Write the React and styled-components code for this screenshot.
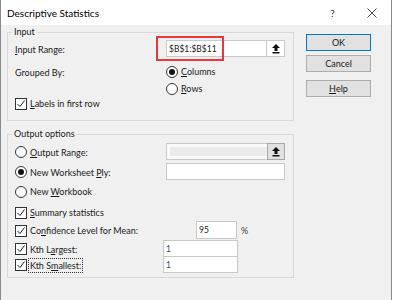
import React from "react";
import styled, { createGlobalStyle } from "styled-components";

const GlobalStyle = createGlobalStyle`
  html, body {
    margin: 0;
    padding: 0;
    background: #ffffff;
  }
  body {
    font-family: Lato, "Noto Sans", "Liberation Sans", sans-serif;
  }
`;

const Window = styled.div`
  width: 392px;
  height: 300px;
  box-sizing: border-box;
  background: #f0f0f0;
  border-left: 1px solid #8a8a8a;
  border-right: 1px solid #8a8a8a;
  overflow: hidden;
  font-size: 9px;
  color: #1a1a1a;
`;

const TitleBar = styled.div`
  height: 25px;
  background: #ffffff;
  display: flex;
  align-items: center;
  padding-left: 6px;
`;

const Title = styled.div`
  flex: 1;
  font-size: 10px;
  color: #000;
`;

const TitleButton = styled.div`
  width: 39px;
  height: 25px;
  display: flex;
  align-items: center;
  justify-content: center;
  font-size: 10px;
  color: #333;
`;

const Body = styled.div`
  display: flex;
  align-items: flex-start;
  gap: 12px;
  padding: 1px 0 0 6px;
`;

const LeftColumn = styled.div`
  width: 287px;
  display: flex;
  flex-direction: column;
`;

const Group = styled.fieldset`
  margin: ${(p) => p.$mt || 0}px 0 0 0;
  padding: 0 8px ${(p) => p.$pb}px 7px;
  border: 1px solid #d9d9d9;
  min-width: 0;
`;

const Legend = styled.legend`
  padding: 0 2px;
  margin-left: -3px;
  line-height: 12px;
  font-size: 9px;
  color: #1a1a1a;
`;

const Row = styled.div`
  position: relative;
  display: flex;
  align-items: center;
  height: ${(p) => p.$h}px;
  margin-top: ${(p) => p.$mt || 0}px;
`;

const LabelCell = styled.div`
  width: ${(p) => p.$w}px;
  flex-shrink: 0;
  display: flex;
  align-items: center;
  white-space: nowrap;
  padding-top: 1px;
`;

const Field = styled.div`
  width: ${(p) => p.$w}px;
  height: 100%;
  box-sizing: border-box;
  border: 1px solid #c9c9c9;
  background: ${(p) => (p.$disabled ? "#ececec" : "#ffffff")};
  box-shadow: ${(p) => (p.$disabled ? "inset 0 0 0 3px #fafafa" : "none")};
  display: flex;
  align-items: center;
  padding-left: 2px;
  font-size: 8.5px;
  color: ${(p) => p.$color || "#1a1a1a"};
`;

const FieldText = styled.span`
  flex: 1;
`;

const UploadButton = styled.div`
  width: 18px;
  height: ${(p) => (p.$disabled ? "calc(100% + 2px)" : "100%")};
  margin-right: ${(p) => (p.$disabled ? "-1px" : "0")};
  box-sizing: border-box;
  border-left: 1px solid #c9c9c9;
  ${(p) => p.$disabled && "border: 1px solid #a8a8a8;"}
  background: ${(p) => (p.$disabled ? "#e1e1e1" : "#ffffff")};
  display: flex;
  align-items: center;
  justify-content: center;
`;

const Highlight = styled.div`
  position: absolute;
  left: 141px;
  top: -4px;
  width: 68px;
  height: 25px;
  box-sizing: border-box;
  border: 2px solid #e8383d;
  pointer-events: none;
`;

const RadioCircle = styled.span`
  width: 12px;
  height: 12px;
  box-sizing: border-box;
  border-radius: 50%;
  border: 1px solid #333;
  background: #fff;
  display: inline-flex;
  align-items: center;
  justify-content: center;
  flex-shrink: 0;
`;

const RadioDot = styled.span`
  width: 6px;
  height: 6px;
  border-radius: 50%;
  background: #111;
`;

const CheckBoxBox = styled.span`
  width: 12px;
  height: 12px;
  box-sizing: border-box;
  border: 1px solid #333;
  background: #fff;
  display: inline-flex;
  align-items: center;
  justify-content: center;
  flex-shrink: 0;
`;

const OptionText = styled.span`
  margin-left: 2px;
  padding: 0 1px;
  line-height: 13px;
  outline: ${(p) => (p.$focus ? "1px dotted #333" : "none")};
`;

const Key = styled.u`
  text-decoration-thickness: 1px;
  text-underline-offset: 1px;
`;

const Percent = styled.span`
  margin-left: 4px;
  color: #444;
`;

const ButtonColumn = styled.div`
  display: flex;
  flex-direction: column;
  padding-top: 8px;
`;

const Button = styled.div`
  width: 65px;
  height: 17px;
  box-sizing: border-box;
  margin-top: ${(p) => p.$mt || 0}px;
  border: 1px solid ${(p) => (p.$primary ? "#0078d7" : "#adadad")};
  background: #e1e1e1;
  display: flex;
  align-items: center;
  justify-content: center;
  font-size: 9px;
  color: #1a1a1a;
`;

const UpArrow = () => (
  <svg width="8" height="10" viewBox="0 0 8 10">
    <polygon points="4,0 8,4 5.5,4 5.5,7 2.5,7 2.5,4 0,4" fill="#111" />
    <rect x="0.5" y="8" width="7" height="1.5" fill="#111" />
  </svg>
);

const CloseIcon = () => (
  <svg width="10" height="10" viewBox="0 0 10 10">
    <path d="M0.5 0.5 L9.5 9.5 M9.5 0.5 L0.5 9.5" stroke="#333" strokeWidth="0.9" />
  </svg>
);

const Radio = ({ checked, children }) => (
  <>
    <RadioCircle>{checked && <RadioDot />}</RadioCircle>
    <OptionText>{children}</OptionText>
  </>
);

const CheckBox = ({ children, focus }) => (
  <>
    <CheckBoxBox>
      <svg width="10" height="10" viewBox="0 0 10 10">
        <path d="M1.5 5 L4 7.5 L8.5 1.5" stroke="#222" strokeWidth="1" fill="none" />
      </svg>
    </CheckBoxBox>
    <OptionText $focus={focus}>{children}</OptionText>
  </>
);

export default function App() {
  return (
    <>
      <GlobalStyle />
      <Window>
        <TitleBar>
          <Title>Descriptive Statistics</Title>
          <TitleButton>?</TitleButton>
          <TitleButton>
            <CloseIcon />
          </TitleButton>
        </TitleBar>
        <Body>
          <LeftColumn>
            <Group $pb={9}>
              <Legend>Input</Legend>
              <Row $h={17} $mt={2}>
                <LabelCell $w={151}>
                  <span>
                    <Key>I</Key>nput Range:
                  </span>
                </LabelCell>
                <Field $w={120}>
                  <FieldText>$B$1:$B$11</FieldText>
                  <UploadButton>
                    <UpArrow />
                  </UploadButton>
                </Field>
                <Highlight />
              </Row>
              <Row $h={15} $mt={7}>
                <LabelCell $w={151}>Grouped By:</LabelCell>
                <Radio checked>
                  <Key>C</Key>olumns
                </Radio>
              </Row>
              <Row $h={15} $mt={2}>
                <LabelCell $w={151} />
                <Radio>
                  <Key>R</Key>ows
                </Radio>
              </Row>
              <Row $h={15} $mt={0}>
                <CheckBox>
                  <Key>L</Key>abels in first row
                </CheckBox>
              </Row>
            </Group>

            <Group $mt={7} $pb={4}>
              <Legend>Output options</Legend>
              <Row $h={17} $mt={3}>
                <LabelCell $w={151}>
                  <Radio>
                    <Key>O</Key>utput Range:
                  </Radio>
                </LabelCell>
                <Field $w={120} $disabled>
                  <FieldText />
                  <UploadButton $disabled>
                    <UpArrow />
                  </UploadButton>
                </Field>
              </Row>
              <Row $h={17} $mt={3}>
                <LabelCell $w={151}>
                  <Radio checked>
                    New Worksheet <Key>P</Key>ly:
                  </Radio>
                </LabelCell>
                <Field $w={120} />
              </Row>
              <Row $h={15} $mt={4}>
                <Radio>
                  New <Key>W</Key>orkbook
                </Radio>
              </Row>
              <Row $h={15} $mt={6}>
                <CheckBox>
                  <Key>S</Key>ummary statistics
                </CheckBox>
              </Row>
              <Row $h={18} $mt={1}>
                <LabelCell $w={181}>
                  <CheckBox>
                    Co<Key>n</Key>fidence Level for Mean:
                  </CheckBox>
                </LabelCell>
                <Field $w={41}>95</Field>
                <Percent>%</Percent>
              </Row>
              <Row $h={17} $mt={1}>
                <LabelCell $w={148}>
                  <CheckBox>
                    Kth L<Key>a</Key>rgest:
                  </CheckBox>
                </LabelCell>
                <Field $w={75} $color="#2f4f7f">1</Field>
              </Row>
              <Row $h={17} $mt={-1}>
                <LabelCell $w={148}>
                  <CheckBox focus>
                    Kth S<Key>m</Key>allest:
                  </CheckBox>
                </LabelCell>
                <Field $w={75} $color="#2f4f7f">1</Field>
              </Row>
            </Group>
          </LeftColumn>
          <ButtonColumn>
            <Button $primary>OK</Button>
            <Button $mt={4}>Cancel</Button>
            <Button $mt={8}>
              <Key>H</Key>elp
            </Button>
          </ButtonColumn>
        </Body>
      </Window>
    </>
  );
}
